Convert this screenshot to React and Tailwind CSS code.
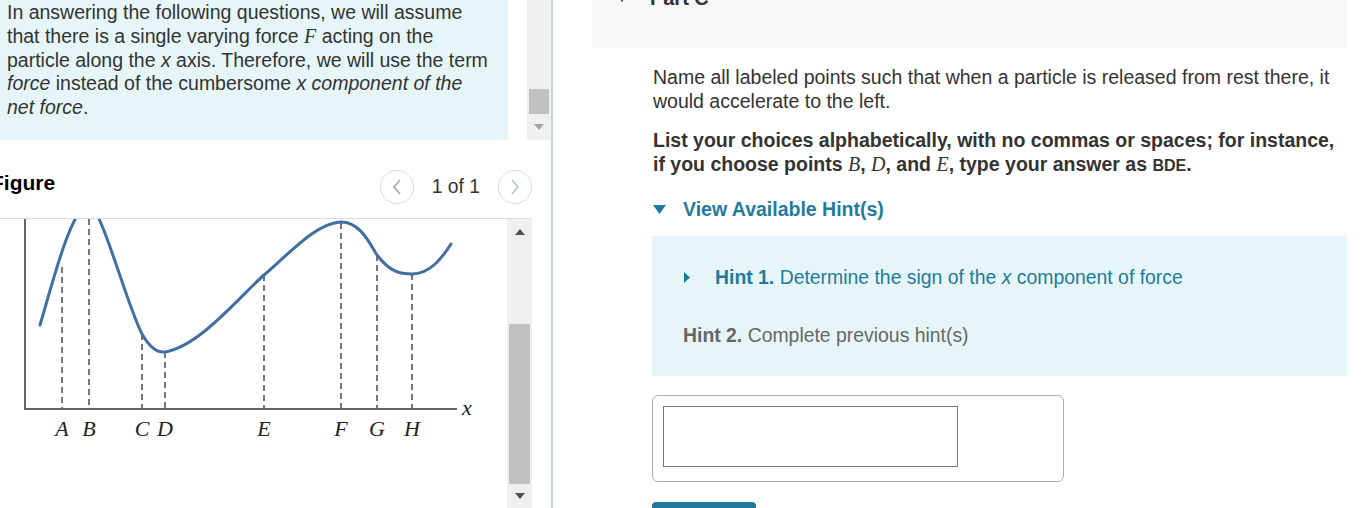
import React from 'react'

const FONT = { fontFamily: '"Liberation Sans", Arial, sans-serif' }

function MathVar({ children }) {
  return (
    <span className="italic text-[20px] leading-none" style={{ fontFamily: '"Liberation Serif", "DejaVu Serif", serif' }}>
      {children}
    </span>
  )
}

function Scrollbar({ thumbTop, thumbHeight, upArrow = true, arrowColor = '#505050', className = '' }) {
  return (
    <div className={`relative bg-[#f0f0f0] ${className}`}>
      {upArrow && (
        <svg className="absolute left-1/2 top-[10px] -translate-x-1/2" width="10" height="6" viewBox="0 0 10 6">
          <polygon points="0,6 10,6 5,0" fill={arrowColor} />
        </svg>
      )}
      <div
        className="absolute left-[2px] right-[2px] bg-[#c1c1c1]"
        style={{ top: thumbTop, height: thumbHeight }}
      />
      <svg className="absolute left-1/2 bottom-[10px] -translate-x-1/2" width="10" height="6" viewBox="0 0 10 6">
        <polygon points="0,0 10,0 5,6" fill={arrowColor} />
      </svg>
    </div>
  )
}

function NavButton({ dir }) {
  return (
    <div className="flex h-[34px] w-[34px] items-center justify-center rounded-full border border-[#dcdcdc] bg-white">
      <svg width="12" height="18" viewBox="0 0 12 18">
        {dir === 'left' ? (
          <polyline points="9,2 3,9 9,16" fill="none" stroke="#a9a9a9" strokeWidth="1.6" />
        ) : (
          <polyline points="3,2 9,9 3,16" fill="none" stroke="#b8c2cc" strokeWidth="1.6" />
        )}
      </svg>
    </div>
  )
}

const points = [
  { label: 'A', x: 62, top: 267 },
  { label: 'B', x: 89, top: 219 },
  { label: 'C', x: 142, top: 334 },
  { label: 'D', x: 165, top: 352 },
  { label: 'E', x: 264, top: 275 },
  { label: 'F', x: 341, top: 223 },
  { label: 'G', x: 377, top: 255 },
  { label: 'H', x: 412, top: 274 },
]

function ForceGraph() {
  return (
    <svg width="507" height="289" viewBox="0 219 507 289" className="block">
      <line x1="25" y1="210" x2="25" y2="410" stroke="#666" strokeWidth="2" />
      <line x1="24" y1="409" x2="457" y2="409" stroke="#666" strokeWidth="2" />
      {points.map((p) => (
        <line
          key={p.label}
          x1={p.x}
          y1={p.top}
          x2={p.x}
          y2="408"
          stroke="#555"
          strokeWidth="1.6"
          strokeDasharray="6 4"
        />
      ))}
      <path
        d="M40,325 C52,285 70,212 87,205 C100,200 124,298 142,334 C150,348 157,353 165,352 C200,346 240,296 264,275 C290,253 315,224 340,222 C360,221 370,244 377,255 C390,272 400,274 412,274 C430,274 442,258 451,244"
        fill="none"
        stroke="#3f6fa3"
        strokeWidth="3"
        strokeLinecap="round"
      />
      <g
        fill="#222"
        fontSize="22"
        fontStyle="italic"
        style={{ fontFamily: '"Liberation Serif", "DejaVu Serif", serif' }}
        textAnchor="middle"
      >
        {points.map((p) => (
          <text key={p.label} x={p.x} y="436">
            {p.label}
          </text>
        ))}
        <text x="467" y="415">x</text>
      </g>
    </svg>
  )
}

export default function App() {
  return (
    <div className="flex h-[508px] w-[1365px] overflow-hidden bg-white text-[#333]" style={FONT}>
      {/* left column */}
      <div className="w-[553px] shrink-0 border-r-2 border-[#c3d2e4]">
        <div className="flex h-[140px]">
          <div className="w-[508px] bg-[#e6f6f8] pl-[7px] pr-[17px] pt-[1px] text-[19.5px] leading-[23.75px]">
            In answering the following questions, we will assume that there is a single varying force{' '}
            <MathVar>F</MathVar> acting on the particle along the <i>x</i> axis. Therefore, we will use the term{' '}
            <i>force</i> instead of the cumbersome <i>x component of the net force</i>.
          </div>
          <Scrollbar
            className="ml-[19px] w-[24px]"
            thumbTop={89}
            thumbHeight={25}
            upArrow={false}
            arrowColor="#a3a3a3"
          />
        </div>

        <div className="flex h-[79px] w-[532px] items-center justify-between border-b border-[#dcdcdc] pt-[12px]">
          <h2 className="ml-[-9px] mt-[-4px] text-[21px] font-bold text-black">Figure</h2>
          <div className="mt-[3px] flex items-center gap-[18px]">
            <NavButton dir="left" />
            <span className="mt-[2px] text-[19.3px] text-[#333]">1 of 1</span>
            <NavButton dir="right" />
          </div>
        </div>

        <div className="flex h-[290px]">
          <div className="w-[507px] overflow-hidden">
            <ForceGraph />
          </div>
          <Scrollbar className="w-[25px]" thumbTop={105} thumbHeight={160} />
        </div>
      </div>

      {/* right column */}
      <div className="flex-1 pl-[39px] pr-[18px]">
        <div className="h-[48px] overflow-hidden bg-[#f8f8f8]">
          <div className="mt-[-14px] flex items-center pl-[24px] text-[20px] font-bold leading-6 text-[#333]">
            <span className="text-[12px]">▼</span>
            <span className="ml-[22px]">Part C</span>
          </div>
        </div>

        <div className="pl-[60px]">
          <p className="mt-[17px] pl-[1px] text-[19.5px] leading-6">
            Name all labeled points such that when a particle is released from rest there, it would accelerate to
            the left.
          </p>
          <p className="mt-[15px] pl-[1px] text-[19.5px] font-bold leading-6">
            List your choices alphabetically, with no commas or spaces; for instance, if you choose points{' '}
            <span className="font-normal">
              <MathVar>B</MathVar>
            </span>
            ,{' '}
            <span className="font-normal">
              <MathVar>D</MathVar>
            </span>
            , and{' '}
            <span className="font-normal">
              <MathVar>E</MathVar>
            </span>
            , type your answer as <span className="text-[16px]">BDE</span>.
          </p>

          <div className="mt-[19px] flex items-center gap-[17px] pl-[1px] text-[19.5px] font-bold leading-6 text-[#1f7b9e]">
            <svg width="13" height="9" viewBox="0 0 13 9">
              <polygon points="0,0 13,0 6.5,9" fill="#1f7b9e" />
            </svg>
            <span>View Available Hint(s)</span>
          </div>

          <div className="mt-[15px] h-[140px] bg-[#e6f6f8] pt-[29px]">
            <div className="flex items-center gap-[25px] pl-[32px] text-[19.4px] leading-6 text-[#1f7b9e]">
              <svg width="6" height="11" viewBox="0 0 6 11">
                <polygon points="0,0 6,5.5 0,11" fill="#1f7b9e" />
              </svg>
              <span>
                <b>Hint 1.</b> Determine the sign of the <i>x</i> component of force
              </span>
            </div>
            <div className="mt-[34px] pl-[31px] text-[19.4px] leading-6 text-[#666]">
              <b>Hint 2.</b> Complete previous hint(s)
            </div>
          </div>

          <div className="mt-[19px] h-[87px] w-[412px] rounded-[6px] border border-[#b0b0b0] p-[10px]">
            <div className="h-[61px] w-[295px] border border-[#777] bg-white" />
          </div>

          <button className="mt-[20px] h-[40px] w-[104px] rounded-[4px] bg-[#217a9e]" />
        </div>
      </div>
    </div>
  )
}
